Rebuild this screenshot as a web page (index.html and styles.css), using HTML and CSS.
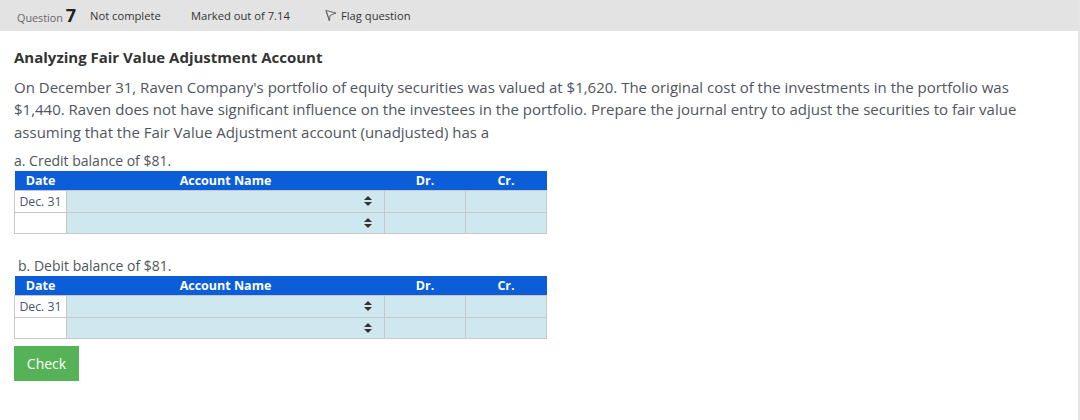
FILE: index.html
```html
<!DOCTYPE html>
<html lang="en">
<head>
    <meta charset="UTF-8">
    <title>Question 7</title>
    <link rel="stylesheet" href="styles.css">
</head>
<body>
    <div class="page">
        <div class="info-bar">
            <span class="question-no">Question <b>7</b></span>
            <span class="state">Not complete</span>
            <span class="grade">Marked out of 7.14</span>
            <span class="flag">
                <svg class="flag-icon" width="12" height="13" viewBox="0 0 12 13">
                    <path d="M1 1.5 L11 4 L5 6.5 L4.5 12 Z M4.5 12 L1 1.5" fill="none" stroke="#666" stroke-width="1"/>
                </svg>
                Flag question
            </span>
        </div>

        <div class="content">
            <h3 class="title">Analyzing Fair Value Adjustment Account</h3>
            <p class="intro">On December 31, Raven Company's portfolio of equity securities was valued at $1,620. The original cost of the investments in the portfolio was $1,440. Raven does not have significant influence on the investees in the portfolio. Prepare the journal entry to adjust the securities to fair value assuming that the Fair Value Adjustment account (unadjusted) has a</p>

            <div class="part-label first">a. Credit balance of $81.</div>
            <table class="journal">
                <thead>
                    <tr><th class="col-date">Date</th><th class="col-name">Account Name</th><th class="col-amt">Dr.</th><th>Cr.</th></tr>
                </thead>
                <tbody>
                    <tr><td class="date">Dec. 31</td><td class="input name"><span class="updown"></span></td><td class="input"></td><td class="input"></td></tr>
                    <tr><td class="date"></td><td class="input name"><span class="updown"></span></td><td class="input"></td><td class="input"></td></tr>
                </tbody>
            </table>

            <div class="part-label second">b. Debit balance of $81.</div>
            <table class="journal">
                <thead>
                    <tr><th class="col-date">Date</th><th class="col-name">Account Name</th><th class="col-amt">Dr.</th><th>Cr.</th></tr>
                </thead>
                <tbody>
                    <tr><td class="date">Dec. 31</td><td class="input name"><span class="updown"></span></td><td class="input"></td><td class="input"></td></tr>
                    <tr><td class="date"></td><td class="input name"><span class="updown"></span></td><td class="input"></td><td class="input"></td></tr>
                </tbody>
            </table>

            <button class="check-btn">Check</button>
        </div>
    </div>
</body>
</html>
```

FILE: styles.css
```css
html, body {
    margin: 0;
    padding: 0;
    background-color: #fff;
}
body {
    font-family: "Open Sans", sans-serif;
    color: #50555d;
}
.page {
    width: 1078px;
    height: 420px;
    border-right: 2px solid #e5e5e5;
    overflow: hidden;
}
.info-bar {
    height: 31px;
    background-color: #e3e3e3;
    display: flex;
    align-items: center;
    padding-left: 17px;
    font-size: 11.2px;
    color: #333;
}
.question-no {
    color: #666;
    font-size: 10.8px;
    width: 73px;
}
.question-no b {
    font-size: 18px;
    line-height: 18px;
    color: #222;
}
.state {
    width: 101px;
}
.grade {
    width: 134px;
}
.flag {
    display: flex;
    align-items: center;
}
.flag-icon {
    margin-right: 4px;
}
.content {
    padding: 0 14px;
}
.title {
    margin: 17px 0 0;
    font-size: 15px;
    line-height: 18px;
    font-weight: 700;
    color: #333;
}
.intro {
    margin: 10px 0 0;
    font-size: 15px;
    line-height: 22.4px;
    width: 1020px;
}
.part-label {
    font-size: 14px;
    line-height: 16px;
    color: #50555d;
}
.first {
    margin-top: 10px;
}
.second {
    margin-top: 24px;
    padding-left: 4px;
}
.journal {
    border-collapse: collapse;
    table-layout: fixed;
    width: 533px;
    margin-top: 2px;
    font-size: 12.5px;
}
.journal th {
    height: 19px;
    padding: 0;
    background-color: #0b5ed7;
    color: #fff;
    font-weight: 700;
    text-align: center;
    border: 0;
}
.col-date { width: 52px; }
.col-name { width: 318px; }
.col-amt { width: 81px; }
.journal td {
    height: 20.5px;
    padding: 0;
    border: 1px solid #c8c8c8;
}
.date {
    background-color: #fff;
    text-align: center;
    font-size: 12.3px;
    color: #4a5568;
}
.input {
    background-color: #cfe7ee;
}
.updown {
    display: block;
    position: relative;
    width: 8px;
    height: 10px;
    margin-left: 297px;
}
.updown::before, .updown::after {
    content: "";
    position: absolute;
    left: 0;
    border-left: 4px solid transparent;
    border-right: 4px solid transparent;
}
.updown::before {
    top: 0;
    border-bottom: 4px solid #333;
}
.updown::after {
    bottom: 0;
    border-top: 4px solid #333;
}
.check-btn {
    display: block;
    margin-top: 7px;
    width: 65px;
    height: 35px;
    padding: 0;
    border: 0;
    background-color: #55b257;
    color: #fff;
    font-family: inherit;
    font-size: 14px;
}
```
